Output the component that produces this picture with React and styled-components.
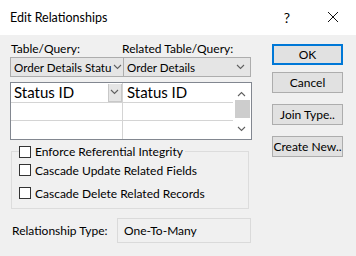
import React from "react";
import styled, { createGlobalStyle } from "styled-components";

const Global = createGlobalStyle`
  html, body { margin: 0; padding: 0; }
  body { background: #f0f0f0; font-family: Lato, "Noto Sans", sans-serif; font-size: 12px; color: #000; }
  * { box-sizing: border-box; }
`;

const Window = styled.div`
  width: 356px;
  height: 256px;
  background: #f0f0f0;
  display: flex;
  flex-direction: column;
  overflow: hidden;
`;

const TitleBar = styled.div`
  height: 35px;
  background: #fff;
  display: flex;
  align-items: center;
  padding: 0 0 1px 10px;
`;

const Title = styled.div`
  flex: 1;
  font-size: 12.5px;
`;

const TitleButton = styled.div`
  width: 46px;
  display: flex;
  justify-content: center;
  align-items: center;
  font-size: 14px;
`;

const Body = styled.div`
  flex: 1;
  display: flex;
`;

const Left = styled.div`
  width: 262px;
  padding: 6px 0 0 10px;
  display: flex;
  flex-direction: column;
`;

const LabelRow = styled.div`
  display: flex;
  height: 16px;
  line-height: 16px;
`;

const Label = styled.div`
  width: ${(p) => p.$w}px;
  padding-left: ${(p) => p.$pl || 0}px;
`;

const ComboRow = styled.div`
  display: flex;
  width: 241px;
`;

const Combo = styled.div`
  width: ${(p) => p.$w}px;
  height: 20px;
  background: #e5e5e5;
  border: 1px solid #adadad;
  margin-left: ${(p) => p.$ml || 0}px;
  display: flex;
  align-items: center;
  padding-left: 3px;
  white-space: nowrap;
  font-size: 11.6px;
`;

const ComboText = styled.span`
  flex: 1;
`;

const Arrow = styled.svg`
  width: 9px;
  height: 6px;
  margin: 0 ${(p) => p.$mr || 4}px 0 2px;
  flex: none;
`;

const Chevron = ({ up, mr }) => (
  <Arrow viewBox="0 0 9 6" $mr={mr}>
    <polyline
      points={up ? "1,5 4.5,1.5 8,5" : "1,1 4.5,4.5 8,1"}
      fill="none"
      stroke="#606060"
      strokeWidth="1.1"
    />
  </Arrow>
);

const Grid = styled.div`
  margin-top: 5px;
  width: 242px;
  height: 58px;
  background: #fff;
  border: 1px solid #828790;
  display: flex;
`;

const Rows = styled.div`
  flex: 1;
  display: flex;
  flex-direction: column;
`;

const GridRow = styled.div`
  height: ${(p) => p.$h}px;
  display: flex;
  border-bottom: ${(p) => (p.$last ? "none" : "1px solid #d4d4d4")};
`;

const Cell = styled.div`
  width: ${(p) => p.$w}px;
  display: flex;
  align-items: center;
  padding-left: ${(p) => p.$pl || 0}px;
  border-right: ${(p) => (p.$sep ? "1px solid #d4d4d4" : "none")};
  font-size: 15px;
`;

const CellText = styled.span`
  flex: 1;
`;

const CellDrop = styled.div`
  width: 14px;
  height: 100%;
  background: #e5e5e5;
  border: 1px solid #c8c8c8;
  border-top: none;
  margin-top: 1px;
  display: flex;
  align-items: center;
  justify-content: center;
`;

const Scrollbar = styled.div`
  width: 18px;
  display: flex;
  flex-direction: column;
  align-items: center;
  padding-top: 8px;
`;

const Thumb = styled.div`
  width: 15px;
  height: 18px;
  background: #cdcdcd;
  margin: 3px 0 8px;
`;

const Group = styled.fieldset`
  margin: 5px 0 0 1px;
  padding: 0 0 0 7px;
  width: 238px;
  height: 64px;
  border: 1px solid #dcdcdc;
  border-radius: 0;
`;

const Legend = styled.legend`
  padding: 0 2px 0 0;
  margin-left: 0;
`;

const CheckRow = styled.label`
  display: flex;
  align-items: center;
  height: ${(p) => p.$h || 22}px;
  gap: 4px;
`;

const Box = styled.span`
  width: 12px;
  height: 12px;
  border: 1px solid #333;
  background: #fff;
  flex: none;
`;

const TypeRow = styled.div`
  display: flex;
  align-items: center;
  margin-top: 9px;
`;

const TypeLabel = styled.div`
  width: 107px;
  padding-left: 2px;
`;

const TypeBox = styled.div`
  width: 134px;
  height: 25px;
  border: 1px solid #dadada;
  display: flex;
  align-items: center;
  padding-left: 6px;
`;

const Right = styled.div`
  flex: 1;
  display: flex;
  flex-direction: column;
  padding: 9px 0 0 10px;
`;

const Button = styled.div`
  width: 71px;
  height: 21px;
  background: #e1e1e1;
  border: ${(p) => (p.$default ? "2px solid #0078d7" : "1px solid #adadad")};
  display: flex;
  align-items: center;
  justify-content: center;
  white-space: nowrap;
  margin-bottom: ${(p) => p.$mb || 0}px;
`;

export default function App() {
  return (
    <Window>
      <Global />
      <TitleBar>
        <Title>Edit Relationships</Title>
        <TitleButton>?</TitleButton>
        <TitleButton>
          <svg width="12" height="12" viewBox="0 0 12 12">
            <path d="M1 1 L11 11 M11 1 L1 11" stroke="#111" strokeWidth="1" fill="none" />
          </svg>
        </TitleButton>
      </TitleBar>
      <Body>
        <Left>
          <LabelRow>
            <Label $w={112} $pl={1}>Table/Query:</Label>
            <Label $w={130}>Related Table/Query:</Label>
          </LabelRow>
          <ComboRow>
            <Combo $w={114}>
              <ComboText>Order Details Statu</ComboText>
              <Chevron mr={3} />
            </Combo>
            <Combo $w={128} $ml={-1}>
              <ComboText>Order Details</ComboText>
              <Chevron mr={5} />
            </Combo>
          </ComboRow>
          <Grid>
            <Rows>
              <GridRow $h={20}>
                <Cell $w={112} $pl={3} $sep>
                  <CellText>Status ID</CellText>
                  <CellDrop>
                    <Chevron mr={0} />
                  </CellDrop>
                </Cell>
                <Cell $w={110} $pl={4}>Status ID</Cell>
              </GridRow>
              <GridRow $h={19}>
                <Cell $w={112} $sep />
                <Cell $w={110} />
              </GridRow>
              <GridRow $h={18} $last>
                <Cell $w={112} $sep />
                <Cell $w={110} />
              </GridRow>
            </Rows>
            <Scrollbar>
              <Chevron up mr={0} />
              <Thumb />
              <Chevron mr={0} />
            </Scrollbar>
          </Grid>
          <Group>
            <Legend>
              <CheckRow $h={13}>
                <Box />
                Enforce Referential Integrity
              </CheckRow>
            </Legend>
            <CheckRow $h={24}>
              <Box />
              Cascade Update Related Fields
            </CheckRow>
            <CheckRow $h={22}>
              <Box />
              Cascade Delete Related Records
            </CheckRow>
          </Group>
          <TypeRow>
            <TypeLabel>Relationship Type:</TypeLabel>
            <TypeBox>One-To-Many</TypeBox>
          </TypeRow>
        </Left>
        <Right>
          <Button $default $mb={7}>OK</Button>
          <Button $mb={11}>Cancel</Button>
          <Button $mb={11}>Join Type..</Button>
          <Button>Create New..</Button>
        </Right>
      </Body>
    </Window>
  );
}
